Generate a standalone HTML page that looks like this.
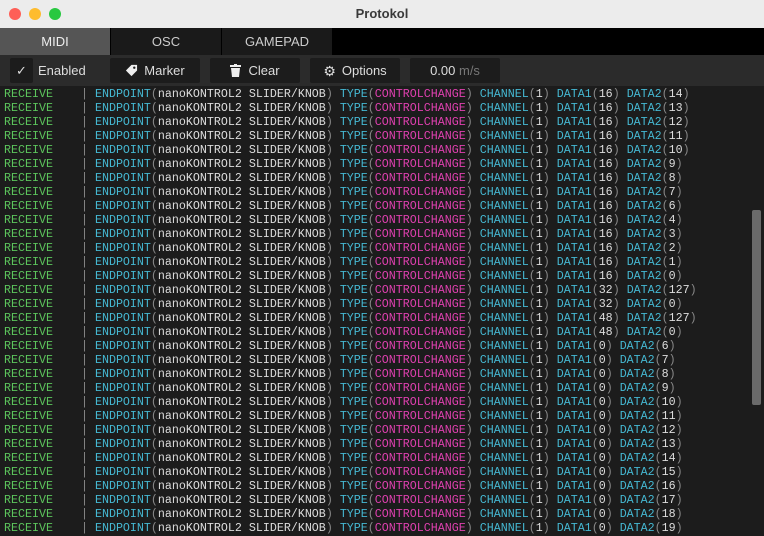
<!DOCTYPE html>
<html><head><meta charset="utf-8"><style>
*{margin:0;padding:0;box-sizing:border-box}
body{width:764px;height:536px;overflow:hidden;background:#1c1c1c;font-family:"Liberation Sans",sans-serif;position:relative}
.title{position:absolute;left:0;top:0;width:764px;height:28px;background:#ececec;text-align:center;font-weight:bold;font-size:13px;line-height:28px;color:#3a3a3a}
.dot{position:absolute;top:8px;width:12px;height:12px;border-radius:50%}
.tabs{position:absolute;top:28px;left:0;width:764px;height:27px;background:#000}
.tab{position:absolute;top:0;height:27px;width:110px;text-align:center;line-height:27px;font-size:13px;color:#ccc;background:#1a1a1a}
.bar{position:absolute;top:55px;left:0;width:764px;height:31px;background:#2b2b2b}
.btn{position:absolute;top:3px;height:25px;background:#1c1c1c;color:#ddd;font-size:13px;line-height:25px;text-align:center;border-radius:2px}
.log{position:absolute;top:87px;left:4px;font-family:"Liberation Mono",monospace;font-size:11.67px;line-height:14px;white-space:pre;color:#ddd}
.g{color:#5cc45c}.c{color:#45b8d2}.p{color:#888}.m{color:#e040b0}
.sb{position:absolute;left:752px;top:210px;width:9px;height:195px;background:#6a6a6a;border-radius:2px}
</style></head><body>
<div class="title">Protokol</div>
<div class="dot" style="left:9px;background:#fe5f57"></div>
<div class="dot" style="left:29px;background:#febc2e"></div>
<div class="dot" style="left:49px;background:#28c840"></div>
<div class="tabs">
<div class="tab" style="left:0;background:#555;color:#eee">MIDI</div>
<div class="tab" style="left:111px">OSC</div>
<div class="tab" style="left:222px">GAMEPAD</div>
</div>
<div class="bar">
<div class="btn" style="left:10px;width:23px">✓</div>
<div style="position:absolute;left:38px;top:3px;line-height:25px;font-size:13px;color:#ddd">Enabled</div>
<div class="btn" style="left:110px;width:90px"><svg width="13" height="13" viewBox="0 0 14 14" style="vertical-align:-2px;margin-right:6px"><path d="M7 1h6v6l-6 6-6-6z" fill="#eee"/><circle cx="10" cy="4" r="1.3" fill="#1c1c1c"/></svg>Marker</div>
<div class="btn" style="left:210px;width:90px"><svg width="11" height="13" viewBox="0 0 11 13" style="vertical-align:-2px;margin-right:7px"><rect x="0" y="1" width="11" height="2" fill="#eee"/><rect x="4" y="0" width="3" height="2" fill="#eee"/><path d="M1 4h9l-1 9H2z" fill="#eee"/></svg>Clear</div>
<div class="btn" style="left:310px;width:90px"><span style="font-size:14px;margin-right:6px;vertical-align:-1px">⚙</span>Options</div>
<div class="btn" style="left:410px;width:90px">0.00 <span style="color:#777">m/s</span></div>
</div>
<div class="log" id="l"></div>
<div class="sb"></div>
<script>
var d=[];[14,13,12,11,10,9,8,7,6,4,3,2,1,0].forEach(v=>d.push([16,v]));
d.push([32,127],[32,0],[48,127],[48,0]);
for(var i=6;i<=19;i++)d.push([0,i]);
var h='';d.forEach(r=>{h+='<span class="g">RECEIVE</span>    <span class="p">|</span> <span class="c">ENDPOINT</span><span class="p">(</span>nanoKONTROL2 SLIDER/KNOB<span class="p">)</span> <span class="c">TYPE</span><span class="p">(</span><span class="m">CONTROLCHANGE</span><span class="p">)</span> <span class="c">CHANNEL</span><span class="p">(</span>1<span class="p">)</span> <span class="c">DATA1</span><span class="p">(</span>'+r[0]+'<span class="p">)</span> <span class="c">DATA2</span><span class="p">(</span>'+r[1]+'<span class="p">)</span>\n'});
document.getElementById('l').innerHTML=h;
</script>
</body></html>
